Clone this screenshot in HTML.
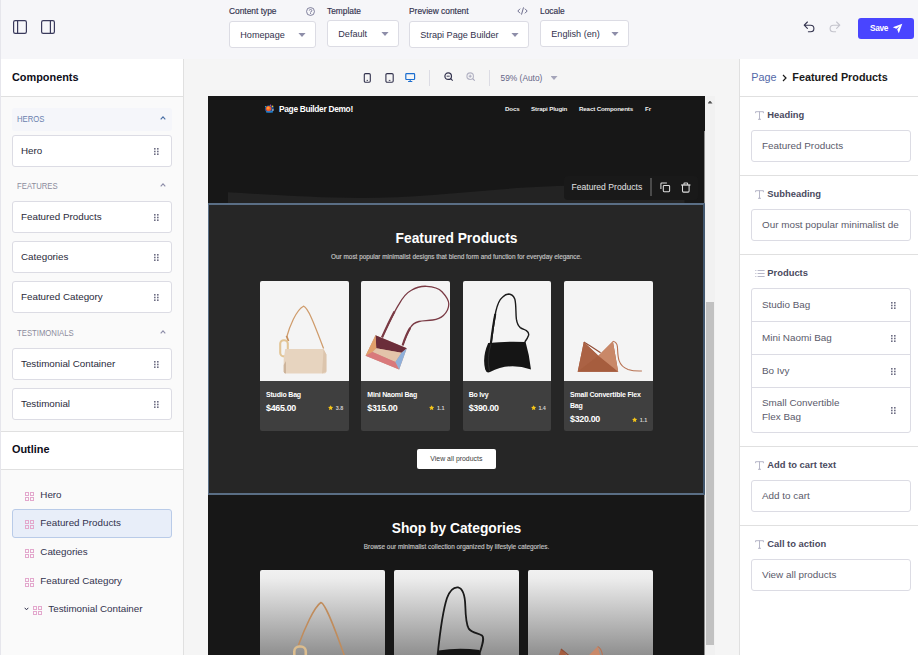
<!DOCTYPE html>
<html lang="en">
<head>
<meta charset="utf-8">
<title>Page Builder</title>
<style>
*{box-sizing:border-box;margin:0;padding:0}
html,body{width:918px;height:655px;overflow:hidden;background:#f6f6f9;font-family:"Liberation Sans",sans-serif;color:#32324d}
.abs{position:absolute}
#topbar{position:absolute;left:0;top:0;width:918px;height:59px;background:#f6f6f9}
.lbl{position:absolute;font-size:8.4px;-webkit-text-stroke:0.15px #32324d;color:#32324d;top:6px;line-height:11px;white-space:nowrap}
.sel{position:absolute;background:#fff;border:1px solid #dcdce4;border-radius:3px;font-size:9.1px;color:#32324d;line-height:26px;padding-left:10.3px;white-space:nowrap}
.sel .car{position:absolute;right:9px;top:10.5px;width:8px;height:4.6px;background:#8e8ea9;clip-path:polygon(0 0,100% 0,50% 100%)}
#left{position:absolute;left:0;top:59px;width:184px;height:596px;background:#fafafa;border-right:1px solid #e0e0e0}
#center{position:absolute;left:184px;top:59px;width:555px;height:596px;background:#f5f5f5}
#right{position:absolute;left:739px;top:59px;width:179px;height:596px;background:#fff;border-left:1px solid #e0e0e0}
.phead{position:absolute;left:0;width:100%;background:#fff;border-bottom:1px solid #e0e0e0;font-weight:bold;font-size:10.9px;color:#0d0d18;padding-left:12px}
.grp{position:absolute;left:12px;width:160px;height:23px;font-size:8.6px;color:#8c8c9c;line-height:23px;padding-left:5px;border-radius:3px;letter-spacing:0}
.item{position:absolute;left:12px;width:160px;height:32px;background:#fff;border:1px solid #dcdce4;border-radius:3px;font-size:9.8px;color:#2a2a3a;line-height:30px;padding-left:8px;white-space:nowrap}

.drag{position:absolute;left:141px;top:12px}
.chev{position:absolute;left:148.3px;top:7.6px}
.ol{position:absolute;left:12px;width:160px;height:29px;font-size:9.8px;color:#32324d;line-height:27px;border:1px solid transparent;border-radius:3px;white-space:nowrap}
.ol.sel2{background:#e8eef9;border-color:#b9cbe8}
.ol .gw{position:absolute;top:0;height:27px}
.ol .gi{position:absolute;top:10px;left:0}
.ol .ot{position:absolute;top:-1px;margin-left:-0.7px}
.ol .oc{position:absolute;left:11px;top:11px}

.pvt{white-space:nowrap}
.card{position:absolute;width:88.7px;height:150px;background:#3f3f3f;border-radius:2px;overflow:hidden}
.cimg{position:absolute;left:0;top:0;width:100%;height:100px;background:#f4f4f4}
.ct{position:absolute;left:6px;top:108px;font-size:7px;font-weight:bold;color:#fff;line-height:11px;white-space:nowrap;letter-spacing:-0.2px}
.cp{position:absolute;left:6px;margin-top:0.7px;font-size:8.9px;font-weight:bold;color:#fff;line-height:11px;letter-spacing:-0.3px}
.cr{position:absolute;right:5.5px;height:10px;line-height:10px;font-size:5.4px;color:#d0d0d0;font-weight:bold;white-space:nowrap}
.cr svg{vertical-align:-0.3px;margin-right:2.3px}
.cat{width:124.5px;height:90px;border-radius:2px 2px 0 0;overflow:hidden;background:linear-gradient(#f1f1f1 0,#ededed 8px,#8e8e8e 86px)}

.rl{font-size:9.4px;font-weight:bold;color:#4a4a5e;line-height:14px;white-space:nowrap}
.rin{width:160px;height:32px;margin-top:-0.5px;border:1px solid #dcdce4;border-radius:3px;background:#fff;font-size:9.9px;color:#5a5a6a;line-height:30px;padding-left:10px;white-space:nowrap;overflow:hidden}
.rrow{width:158px;font-size:9.9px;color:#5a5a6a;padding-left:10px;white-space:nowrap}
.gt{display:inline-block;transform:scaleX(0.9);transform-origin:0 50%}
</style>
</head>
<body>
<div class="abs" style="left:0;top:0;width:1px;height:655px;background:#e6e6ec;z-index:9"></div>
<div id="topbar">
<svg class="abs" style="left:13px;top:20px" width="14" height="14" viewBox="0 0 14 14"><rect x="0.6" y="0.6" width="12.8" height="12.8" rx="1.6" fill="none" stroke="#3a3a5c" stroke-width="1.2"/><line x1="4.6" y1="0.6" x2="4.6" y2="13.4" stroke="#3a3a5c" stroke-width="1.2"/></svg>
<svg class="abs" style="left:41px;top:20px" width="14" height="14" viewBox="0 0 14 14"><rect x="0.6" y="0.6" width="12.8" height="12.8" rx="1.6" fill="none" stroke="#3a3a5c" stroke-width="1.2"/><line x1="9.4" y1="0.6" x2="9.4" y2="13.4" stroke="#3a3a5c" stroke-width="1.2"/></svg>
<div class="lbl" style="left:229px">Content type</div>
<svg class="abs" style="left:305.8px;top:6.8px" width="9" height="9" viewBox="0 0 9 9"><circle cx="4.5" cy="4.5" r="3.95" fill="none" stroke="#6c6c8c" stroke-width="0.85"/><path d="M3.3 3.6 A1.25 1.25 0 1 1 4.5 4.9 V5.5" fill="none" stroke="#6c6c8c" stroke-width="0.8"/><circle cx="4.5" cy="6.6" r="0.5" fill="#6c6c8c"/></svg>
<div class="sel" style="left:229px;top:21px;width:87px;height:27px">Homepage<span class="car"></span></div>
<div class="lbl" style="left:327px">Template</div>
<div class="sel" style="left:327px;top:20px;width:72px;height:27px">Default<span class="car"></span></div>
<div class="lbl" style="left:409px">Preview content</div>
<svg class="abs" style="left:516.7px;top:7px" width="11" height="8" viewBox="0 0 11 8"><path d="M3.1 1.7 L0.8 4 L3.1 6.3 M7.9 1.7 L10.2 4 L7.9 6.3 M6.5 0.4 L4.5 7.6" fill="none" stroke="#666687" stroke-width="0.95"/></svg>
<div class="sel" style="left:409px;top:21px;width:120px;height:27px">Strapi Page Builder<span class="car"></span></div>
<div class="lbl" style="left:540px">Locale</div>
<div class="sel" style="left:540px;top:20px;width:89px;height:27px">English (en)<span class="car"></span></div>
<svg class="abs" style="left:803px;top:21px" width="12" height="12" viewBox="0 0 12 12"><path d="M4.4 1 L1.2 4.2 L4.4 7.4 M1.4 4.2 H7.6 A3.3 3.3 0 0 1 7.6 10.8 H5.4" fill="none" stroke="#32324d" stroke-width="1.1" stroke-linecap="round" stroke-linejoin="round"/></svg>
<svg class="abs" style="left:829px;top:21px" width="12" height="12" viewBox="0 0 12 12"><path d="M7.6 1 L10.8 4.2 L7.6 7.4 M10.6 4.2 H4.4 A3.3 3.3 0 0 0 4.4 10.8 H6.6" fill="none" stroke="#c3c3cc" stroke-width="1.1" stroke-linecap="round" stroke-linejoin="round"/></svg>
<div class="abs" style="left:858px;top:18px;width:56px;height:21px;background:#4945ff;border-radius:3px;color:#fff;font-weight:bold;font-size:8.3px;letter-spacing:-0.35px;line-height:21px;padding-left:12px">Save
<svg class="abs" style="left:34px;top:5px" width="11" height="11" viewBox="0 0 11 11"><path d="M10.3 0.7 L0.8 4.2 L4.3 5.8 L7.6 3.3 L5.2 6.6 L6.8 10.2 Z" fill="#fff"/></svg></div>
</div>
<div id="left">
<div class="phead" style="top:0;height:38px;line-height:37px">Components</div>
<div class="grp" style="top:49px;background:#f5f6fa;color:#6a7fae;"><span class="gt">HEROS</span><svg class="chev" width="6" height="4" viewBox="0 0 6 4"><path d="M0.7 3.3 L3 0.9 L5.3 3.3" fill="none" stroke="#4a6fa5" stroke-width="1.15"/></svg></div>
<div class="item" style="top:76px">Hero<svg class="drag" width="5" height="7" viewBox="0 0 5 7"><g fill="#6e6e84"><rect x="0" y="0" width="1.6" height="1.6"/><rect x="3" y="0" width="1.6" height="1.6"/><rect x="0" y="2.7" width="1.6" height="1.6"/><rect x="3" y="2.7" width="1.6" height="1.6"/><rect x="0" y="5.4" width="1.6" height="1.6"/><rect x="3" y="5.4" width="1.6" height="1.6"/></g></svg></div>
<div class="grp" style="top:116px;"><span class="gt">FEATURES</span><svg class="chev" width="6" height="4" viewBox="0 0 6 4"><path d="M0.7 3.3 L3 0.9 L5.3 3.3" fill="none" stroke="#8e8ea9" stroke-width="1.15"/></svg></div>
<div class="item" style="top:142px">Featured Products<svg class="drag" width="5" height="7" viewBox="0 0 5 7"><g fill="#6e6e84"><rect x="0" y="0" width="1.6" height="1.6"/><rect x="3" y="0" width="1.6" height="1.6"/><rect x="0" y="2.7" width="1.6" height="1.6"/><rect x="3" y="2.7" width="1.6" height="1.6"/><rect x="0" y="5.4" width="1.6" height="1.6"/><rect x="3" y="5.4" width="1.6" height="1.6"/></g></svg></div>
<div class="item" style="top:182px">Categories<svg class="drag" width="5" height="7" viewBox="0 0 5 7"><g fill="#6e6e84"><rect x="0" y="0" width="1.6" height="1.6"/><rect x="3" y="0" width="1.6" height="1.6"/><rect x="0" y="2.7" width="1.6" height="1.6"/><rect x="3" y="2.7" width="1.6" height="1.6"/><rect x="0" y="5.4" width="1.6" height="1.6"/><rect x="3" y="5.4" width="1.6" height="1.6"/></g></svg></div>
<div class="item" style="top:222px">Featured Category<svg class="drag" width="5" height="7" viewBox="0 0 5 7"><g fill="#6e6e84"><rect x="0" y="0" width="1.6" height="1.6"/><rect x="3" y="0" width="1.6" height="1.6"/><rect x="0" y="2.7" width="1.6" height="1.6"/><rect x="3" y="2.7" width="1.6" height="1.6"/><rect x="0" y="5.4" width="1.6" height="1.6"/><rect x="3" y="5.4" width="1.6" height="1.6"/></g></svg></div>
<div class="grp" style="top:263px;"><span class="gt">TESTIMONIALS</span><svg class="chev" width="6" height="4" viewBox="0 0 6 4"><path d="M0.7 3.3 L3 0.9 L5.3 3.3" fill="none" stroke="#8e8ea9" stroke-width="1.15"/></svg></div>
<div class="item" style="top:289px">Testimonial Container<svg class="drag" width="5" height="7" viewBox="0 0 5 7"><g fill="#6e6e84"><rect x="0" y="0" width="1.6" height="1.6"/><rect x="3" y="0" width="1.6" height="1.6"/><rect x="0" y="2.7" width="1.6" height="1.6"/><rect x="3" y="2.7" width="1.6" height="1.6"/><rect x="0" y="5.4" width="1.6" height="1.6"/><rect x="3" y="5.4" width="1.6" height="1.6"/></g></svg></div>
<div class="item" style="top:329px">Testimonial<svg class="drag" width="5" height="7" viewBox="0 0 5 7"><g fill="#6e6e84"><rect x="0" y="0" width="1.6" height="1.6"/><rect x="3" y="0" width="1.6" height="1.6"/><rect x="0" y="2.7" width="1.6" height="1.6"/><rect x="3" y="2.7" width="1.6" height="1.6"/><rect x="0" y="5.4" width="1.6" height="1.6"/><rect x="3" y="5.4" width="1.6" height="1.6"/></g></svg></div>
<div class="phead" style="top:372px;height:39px;line-height:35px;border-top:1px solid #e0e0e0">Outline</div>
<div class="ol" style="top:422px"><span class="gw" style="left:12px"><svg class="gi" width="9" height="9" viewBox="0 0 9 9"><g fill="none" stroke="#e3a8cd" stroke-width="1"><rect x="0.5" y="0.5" width="3" height="3"/><rect x="5.5" y="0.5" width="3" height="3"/><rect x="0.5" y="5.5" width="3" height="3"/><rect x="5.5" y="5.5" width="3" height="3"/></g></svg></span><span class="ot" style="left:28px">Hero</span></div>
<div class="ol sel2" style="top:450px"><span class="gw" style="left:12px"><svg class="gi" width="9" height="9" viewBox="0 0 9 9"><g fill="none" stroke="#e3a8cd" stroke-width="1"><rect x="0.5" y="0.5" width="3" height="3"/><rect x="5.5" y="0.5" width="3" height="3"/><rect x="0.5" y="5.5" width="3" height="3"/><rect x="5.5" y="5.5" width="3" height="3"/></g></svg></span><span class="ot" style="left:28px">Featured Products</span></div>
<div class="ol" style="top:479px"><span class="gw" style="left:12px"><svg class="gi" width="9" height="9" viewBox="0 0 9 9"><g fill="none" stroke="#e3a8cd" stroke-width="1"><rect x="0.5" y="0.5" width="3" height="3"/><rect x="5.5" y="0.5" width="3" height="3"/><rect x="0.5" y="5.5" width="3" height="3"/><rect x="5.5" y="5.5" width="3" height="3"/></g></svg></span><span class="ot" style="left:28px">Categories</span></div>
<div class="ol" style="top:508px"><span class="gw" style="left:12px"><svg class="gi" width="9" height="9" viewBox="0 0 9 9"><g fill="none" stroke="#e3a8cd" stroke-width="1"><rect x="0.5" y="0.5" width="3" height="3"/><rect x="5.5" y="0.5" width="3" height="3"/><rect x="0.5" y="5.5" width="3" height="3"/><rect x="5.5" y="5.5" width="3" height="3"/></g></svg></span><span class="ot" style="left:28px">Featured Category</span></div>
<div class="ol" style="top:536px"><svg class="oc" width="5" height="4" viewBox="0 0 5 4"><path d="M0.7 0.8 L2.5 2.8 L4.3 0.8" fill="none" stroke="#32324d" stroke-width="1"/></svg><span class="gw" style="left:20px"><svg class="gi" width="9" height="9" viewBox="0 0 9 9"><g fill="none" stroke="#e3a8cd" stroke-width="1"><rect x="0.5" y="0.5" width="3" height="3"/><rect x="5.5" y="0.5" width="3" height="3"/><rect x="0.5" y="5.5" width="3" height="3"/><rect x="5.5" y="5.5" width="3" height="3"/></g></svg></span><span class="ot" style="left:36px">Testimonial Container</span></div>
</div>
<div id="center">
<svg class="abs" style="left:179px;top:13.6px" width="9" height="10" viewBox="0 0 9 10"><rect x="1.3" y="0.6" width="6" height="8.6" rx="1.2" fill="none" stroke="#32324d" stroke-width="1.1"/><line x1="3.6" y1="7.4" x2="5" y2="7.4" stroke="#32324d" stroke-width="0.9"/></svg>
<svg class="abs" style="left:201px;top:13.6px" width="10" height="10" viewBox="0 0 10 10"><rect x="0.9" y="0.6" width="7.3" height="8.6" rx="1.2" fill="none" stroke="#32324d" stroke-width="1.1"/><line x1="3.8" y1="7.4" x2="5.4" y2="7.4" stroke="#32324d" stroke-width="0.9"/></svg>
<svg class="abs" style="left:220.8px;top:14px" width="11" height="10" viewBox="0 0 11 10"><rect x="0.8" y="0.7" width="8.8" height="5.8" rx="0.8" fill="none" stroke="#1b6ed0" stroke-width="1.2"/><line x1="5.2" y1="6.5" x2="5.2" y2="8.4" stroke="#1b6ed0" stroke-width="1.1"/><line x1="3.1" y1="8.5" x2="7.3" y2="8.5" stroke="#1b6ed0" stroke-width="1"/></svg>
<div class="abs" style="left:245.3px;top:11px;width:1px;height:16px;background:#dcdce4"></div>
<svg class="abs" style="left:259.5px;top:13px" width="10" height="10" viewBox="0 0 11 11"><circle cx="4.6" cy="4.6" r="3.6" fill="none" stroke="#32324d" stroke-width="1.35"/><line x1="2.9" y1="4.6" x2="6.3" y2="4.6" stroke="#32324d" stroke-width="1"/><line x1="7.3" y1="7.3" x2="9.6" y2="9.6" stroke="#32324d" stroke-width="1.2"/></svg>
<svg class="abs" style="left:281.6px;top:13px" width="10" height="10" viewBox="0 0 11 11"><circle cx="4.6" cy="4.6" r="3.6" fill="none" stroke="#b4b4c4" stroke-width="1.2"/><line x1="2.9" y1="4.6" x2="6.3" y2="4.6" stroke="#a5a5ba" stroke-width="1"/><line x1="4.6" y1="2.9" x2="4.6" y2="6.3" stroke="#a5a5ba" stroke-width="1"/><line x1="7.3" y1="7.3" x2="9.6" y2="9.6" stroke="#a5a5ba" stroke-width="1.2"/></svg>
<div class="abs" style="left:305.3px;top:11px;width:1px;height:16px;background:#dcdce4"></div>
<div class="abs" style="left:316.5px;top:12px;font-size:8.4px;line-height:14px;color:#666687;white-space:nowrap">59% (Auto)</div>
<div class="abs" style="left:366.5px;top:17px;width:7px;height:4px;background:#a5a5ba;clip-path:polygon(0 0,100% 0,50% 100%)"></div>
<div class="abs" style="left:521px;top:37px;width:10px;height:559px;background:#f1f1f1"></div>
<div class="abs" style="left:523.5px;top:41.5px;width:5px;height:3px;background:#505050;clip-path:polygon(50% 0,100% 100%,0 100%)"></div>
<div class="abs" style="left:522px;top:243px;width:8px;height:343px;background:#c1c1c1"></div>
<div class="abs" style="left:520px;top:72px;width:1px;height:72px;background:#8c8c8c;z-index:3"></div>
<div class="abs" style="left:520px;top:436px;width:1px;height:160px;background:#8c8c8c;z-index:3"></div>
<div id="pv" class="abs" style="left:24px;top:37px;width:497px;height:559px;background:#171717;overflow:hidden">
<svg class="abs" style="left:56px;top:7.5px" width="11" height="10" viewBox="0 0 11 10"><ellipse cx="5.4" cy="5" rx="4.6" ry="3.8" fill="#24508f"/><rect x="2" y="7.3" width="7" height="1.3" rx="0.6" fill="#1f8fe0"/><circle cx="4.6" cy="4.6" r="2.7" fill="#f2552c"/><circle cx="4.2" cy="4" r="1.5" fill="#ff9a2e"/><circle cx="8.6" cy="2.4" r="0.8" fill="#f6c630"/><circle cx="8.9" cy="6" r="0.8" fill="#e8e2d0"/><circle cx="1.6" cy="2.6" r="0.7" fill="#2fb7c9"/><circle cx="6.6" cy="1.2" r="0.6" fill="#d94fb5"/></svg>
<div class="abs pvt" style="left:71px;top:7px;font-size:8.35px;font-weight:bold;color:#fff;line-height:12px;letter-spacing:-0.3px">Page Builder Demo!</div>
<div class="abs pvt" style="left:297px;top:8px;font-size:6.2px;font-weight:bold;color:#f0f0f0;line-height:10px;letter-spacing:-0.15px">Docs</div>
<div class="abs pvt" style="left:323px;top:8px;font-size:6.2px;font-weight:bold;color:#f0f0f0;line-height:10px;letter-spacing:-0.15px">Strapi Plugin</div>
<div class="abs pvt" style="left:371px;top:8px;font-size:6.2px;font-weight:bold;color:#f0f0f0;line-height:10px;letter-spacing:-0.15px">React Components</div>
<div class="abs pvt" style="left:437px;top:8px;font-size:6.2px;font-weight:bold;color:#f0f0f0;line-height:10px;letter-spacing:-0.15px">Fr</div>
<svg class="abs" style="left:0;top:84px" width="497" height="24" viewBox="0 0 497 24"><path d="M20 24 V12.3 C 60 14.5, 110 18, 153.6 18 C 200 18, 250 13, 298 9 C 340 5.5, 400 3.5, 476.5 9 V24 Z" fill="#232323"/></svg>
<div class="abs" style="left:0;top:107px;width:497px;height:292px;background:#262626;border:2px solid #5a6e85;border-left-width:1px;border-right-color:#43586f"></div>
<div class="abs" style="left:356px;top:79.5px;width:134px;height:24px;background:#191919;border-radius:4px"></div>
<div class="abs pvt" style="left:363.5px;top:85px;font-size:8.6px;color:#e4e4e4;line-height:12px">Featured Products</div>
<div class="abs" style="left:442.3px;top:81.5px;width:1.4px;height:18px;background:#4a4a4a"></div>
<svg class="abs" style="left:451.6px;top:85.7px" width="11" height="11" viewBox="0 0 11 11"><rect x="3.3" y="3.4" width="6.3" height="6.3" rx="0.9" fill="none" stroke="#dedede" stroke-width="1.05"/><path d="M0.9 6.9 V1.8 A0.9 0.9 0 0 1 1.8 0.9 H6.9" fill="none" stroke="#dedede" stroke-width="1.05"/></svg>
<svg class="abs" style="left:473px;top:85.5px" width="10" height="11" viewBox="0 0 10 11"><path d="M0.2 3 H9.4" stroke="#dedede" stroke-width="1.3"/><path d="M3 2.7 V1.5 Q3 0.9 3.6 0.9 H6 Q6.6 0.9 6.6 1.5 V2.7 M1.5 3.1 V9.1 Q1.5 10.1 2.5 10.1 H7.1 Q8.1 10.1 8.1 9.1 V3.1" fill="none" stroke="#dedede" stroke-width="1.05"/></svg>
<div class="abs pvt" style="left:0;width:497px;text-align:center;top:134px;font-size:13.8px;font-weight:bold;color:#fff;line-height:18px">Featured Products</div>
<div class="abs pvt" style="left:0;width:497px;text-align:center;top:156px;font-size:6.4px;color:#c4c4c4;line-height:10px;-webkit-text-stroke:0.15px #c4c4c4">Our most popular minimalist designs that blend form and function for everyday elegance.</div>
<div class="card" style="left:52px;top:185px"><div class="cimg" id="bag1"><svg width="88.7" height="100" viewBox="0 0 88.7 100"><path d="M26.7 56 C29.5 46, 36 29, 43.5 25.2 C48.5 27, 55 45, 63.6 67.5" stroke="#cf9c6c" stroke-width="1.25" fill="none"/><path d="M26.5 55 L28.5 60" stroke="#c58d5a" stroke-width="1.8" fill="none"/><rect x="20.2" y="59.2" width="7.6" height="16.2" rx="3.6" stroke="#e2c596" stroke-width="2.1" fill="none"/><path d="M25.2 68 H63.5 L66.4 73.5 V90.4 Q66.4 92.4 64.4 92.4 H25.7 Q23.7 92.4 23.7 90.4 V78 Z" fill="#e7d4bf"/><path d="M23.7 84 L26 80 V92.4 H25.7 Q23.7 92.4 23.7 90.4 Z" fill="#cdb49b"/><path d="M63.5 68 L66.4 73.5 V90.4 L62 92.4 L63 78 Z" fill="#dcc5ad"/></svg></div><div class="ct">Studio Bag</div><div class="cp" style="top:121px">$465.00</div><div class="cr" style="top:122px"><svg width="5.3" height="5.3" viewBox="0 0 10 10"><path d="M5 0.3 L6.5 3.5 L9.9 3.9 L7.4 6.2 L8.1 9.7 L5 8 L1.9 9.7 L2.6 6.2 L0.1 3.9 L3.5 3.5 Z" fill="#f5c518"/></svg><span>3.8</span></div></div>
<div class="card" style="left:153.3px;top:185px"><div class="cimg" id="bag2"><svg width="88.7" height="100" viewBox="0 0 88.7 100"><path d="M21.4 55.7 C27 44, 33 31, 38.2 22.9 C42 16, 46 11.5, 50.4 9.2 C55 6.5, 60 5, 65.6 5.3 C72 5.6, 78 7.5, 81 10.7 C85 15, 87.8 19, 87.8 22.9 C87.8 28, 85.5 31.5, 82.4 34.4 C79.5 37, 76 38.3, 71.8 39 C67 39.8, 62 39.6, 58 40.5 C54 41.5, 51 43.5, 48.9 47.3 C46.5 52, 44 58, 42 63.4" stroke="#7a3a44" stroke-width="1.3" fill="none"/><path d="M21 56.5 C25 47.5, 29 39, 33.5 30.5" stroke="#7a3a44" stroke-width="2.2" fill="none"/><path d="M41.6 64.5 C43.5 58.5, 46 52, 49.2 46.8" stroke="#7a3a44" stroke-width="2.2" fill="none"/><polygon points="14.5,54.2 45.8,67.2 38.2,88.5 4.6,74.8" fill="#c99a86"/><polygon points="14.5,54.2 45.8,67.2 40.5,71.8 15.3,67.2" fill="#6b2d3a"/><polygon points="14.5,54.2 15.3,67.2 11.5,71 4.6,74.8" fill="#e2a06a"/><polygon points="15.3,67.2 40.5,71.8 34.4,81 11.5,71" fill="#e3c4aa"/><polygon points="11.5,71 34.4,81 38.2,88.5 4.6,74.8" fill="#d9797b"/><polygon points="45.8,67.2 38.2,88.5 34.4,81 40.5,71.8" fill="#8fb0da"/></svg></div><div class="ct">Mini Naomi Bag</div><div class="cp" style="top:121px">$315.00</div><div class="cr" style="top:122px"><svg width="5.3" height="5.3" viewBox="0 0 10 10"><path d="M5 0.3 L6.5 3.5 L9.9 3.9 L7.4 6.2 L8.1 9.7 L5 8 L1.9 9.7 L2.6 6.2 L0.1 3.9 L3.5 3.5 Z" fill="#f5c518"/></svg><span>1.1</span></div></div>
<div class="card" style="left:254.7px;top:185px"><div class="cimg" id="bag3"><svg width="88.7" height="100" viewBox="0 0 88.7 100"><path d="M28.2 62 C29.5 52, 31 40, 32.8 30.5 C34.5 23, 36.5 18.5, 39.7 16 C41.8 13.8, 43.8 13, 45.8 13 C48.5 13.2, 50.6 15, 51.9 18.3 C53.3 24, 52.6 32, 53.4 38.2 C54 42, 55 44.8, 57.3 46.6 C59.5 48.2, 61.6 48.4, 63.4 49.6 C65.2 50.8, 66 52.4, 65.6 54.2 C64.8 56.8, 63.4 58.8, 61.8 61" stroke="#1a1a1a" stroke-width="1.4" fill="none"/><path d="M27.8 63 C29 53, 30.5 42, 32.3 33" stroke="#1a1a1a" stroke-width="2.1" fill="none"/><path d="M25.2 62 Q44 60 62.6 61 Q66.4 74 68 88.5 Q46 81 27 91 Q23.5 92.5 22.2 88.5 Q19 76 25.2 62 Z" fill="#151515"/><path d="M28 63 Q23.5 77 26.5 90" stroke="#3a3a3a" stroke-width="0.6" fill="none"/></svg></div><div class="ct">Bo Ivy</div><div class="cp" style="top:121px">$390.00</div><div class="cr" style="top:122px"><svg width="5.3" height="5.3" viewBox="0 0 10 10"><path d="M5 0.3 L6.5 3.5 L9.9 3.9 L7.4 6.2 L8.1 9.7 L5 8 L1.9 9.7 L2.6 6.2 L0.1 3.9 L3.5 3.5 Z" fill="#f5c518"/></svg><span>1.4</span></div></div>
<div class="card" style="left:356px;top:185px"><div class="cimg" id="bag4"><svg width="88.7" height="100" viewBox="0 0 88.7 100"><path d="M48.9 60.3 C52 61, 53.2 63, 53.4 65.6 C53.8 70, 53.6 75, 55 79.4 C56.5 84, 60 87, 64.1 88.5 C68.5 90, 73 90.2, 77.9 90" stroke="#b87252" stroke-width="1.1" fill="none"/><path d="M19.8 61 C25 64, 31 68, 36.6 71.8" stroke="#8f4a32" stroke-width="1.2" fill="none"/><polygon points="19.8,61 34.4,74.8 48.9,60.3 54.2,90.8 13.7,90.8" fill="#a96043"/><polygon points="19.8,61 34.4,74.8 13.7,90.8" fill="#ab6244"/><polygon points="13.7,90.8 34.4,74.8 54.2,90.8" fill="#a65d3e"/><polygon points="48.9,60.3 54.2,90.8 34.4,74.8" fill="#c98868"/></svg></div><div class="ct">Small Convertible Flex<br>Bag</div><div class="cp" style="top:132.5px">$320.00</div><div class="cr" style="top:133.5px"><svg width="5.3" height="5.3" viewBox="0 0 10 10"><path d="M5 0.3 L6.5 3.5 L9.9 3.9 L7.4 6.2 L8.1 9.7 L5 8 L1.9 9.7 L2.6 6.2 L0.1 3.9 L3.5 3.5 Z" fill="#f5c518"/></svg><span>1.1</span></div></div>
<div class="abs pvt" style="left:209px;top:353px;width:78.7px;height:20px;background:#fff;border-radius:2px;font-size:6.9px;color:#3a3a3a;text-align:center;line-height:20px">View all products</div>
<div class="abs pvt" style="left:0;width:497px;text-align:center;top:424px;font-size:13.8px;font-weight:bold;color:#fff;line-height:18px">Shop by Categories</div>
<div class="abs pvt" style="left:0;width:497px;text-align:center;top:446px;font-size:6.4px;color:#c4c4c4;line-height:10px;-webkit-text-stroke:0.15px #c4c4c4">Browse our minimalist collection organized by lifestyle categories.</div>
<div class="abs cat" id="cat1" style="left:52px;top:474px"><svg width="124" height="90" viewBox="0 0 124 90"><path d="M38.5 75 C44 60, 54 37, 60.9 32.5 C66 34, 76 62, 84.5 86" stroke="#c08c5c" stroke-width="1.5" fill="none"/><rect x="34.3" y="76.5" width="11.5" height="22" rx="5" stroke="#dcbd8e" stroke-width="2.6" fill="none"/></svg></div>
<div class="abs cat" id="cat2" style="left:186px;top:474px"><svg width="124" height="90" viewBox="0 0 124 90"><path d="M43.6 85 C46 62, 49 40, 53 28 C56 20, 60 17, 64 17.4 C69 18.5, 71 26, 71.3 36 C71.6 46, 72 54, 74.7 58.6 C78 63, 84 63, 88 65.5 C91 68, 88 76, 85 85" stroke="#1a1a1a" stroke-width="1.8" fill="none"/><path d="M42 90 L44.5 80.5 Q64 77.5 85.5 80 L88 90 Z" fill="#151515"/></svg></div>
<div class="abs cat" id="cat3" style="left:320px;top:474px"><svg width="124" height="90" viewBox="0 0 124 90"><polygon points="33,79 43,90 29,90" fill="#a65d3e"/><polygon points="69.7,76.6 73.5,90 56,90" fill="#c98868"/><path d="M33 79 L45 89" stroke="#8f4a32" stroke-width="1.2"/><path d="M69.7 76.6 C73 78, 74.5 82, 75 90" stroke="#b87252" stroke-width="1.1" fill="none"/></svg></div>
</div>
</div>
<div id="right">
<div class="abs" style="left:0;top:0;width:178px;height:38px;border-bottom:1px solid #e0e0e0"></div>
<div class="abs" style="left:11.3px;top:10px;font-size:10.8px;line-height:16px;color:#5468a8;white-space:nowrap">Page</div>
<svg class="abs" style="left:42px;top:14.5px" width="5" height="8" viewBox="0 0 5 8"><path d="M1 1 L4 4 L1 7" fill="none" stroke="#1a1a1a" stroke-width="1.2"/></svg>
<div class="abs" style="left:52.3px;top:10px;font-size:10.8px;line-height:16px;font-weight:bold;color:#1a1a1a;white-space:nowrap">Featured Products</div>
<svg class="abs" style="left:15px;top:52.0px" width="9" height="9" viewBox="0 0 9 9"><path d="M0.6 2.2 V0.7 H8.4 V2.2 M4.5 0.7 V8.3 M3 8.3 H6" fill="none" stroke="#a5a5ba" stroke-width="0.8"/></svg>
<div class="abs rl" style="left:27.3px;top:49.0px">Heading</div>
<div class="abs rin" style="left:11px;top:71.5px">Featured Products</div>
<div class="abs" style="left:0;top:116.0px;width:178px;height:1px;background:#e0e0e0"></div>
<svg class="abs" style="left:15px;top:131.0px" width="9" height="9" viewBox="0 0 9 9"><path d="M0.6 2.2 V0.7 H8.4 V2.2 M4.5 0.7 V8.3 M3 8.3 H6" fill="none" stroke="#a5a5ba" stroke-width="0.8"/></svg>
<div class="abs rl" style="left:27.3px;top:128.0px">Subheading</div>
<div class="abs rin" style="left:11px;top:150.5px">Our most popular minimalist de</div>
<div class="abs" style="left:0;top:195.0px;width:178px;height:1px;background:#e0e0e0"></div>
<svg class="abs" style="left:14.5px;top:210.0px" width="10" height="9" viewBox="0 0 10 9"><g stroke="#a5a5ba" stroke-width="0.8"><line x1="0.3" y1="1.5" x2="1.3" y2="1.5"/><line x1="2.6" y1="1.5" x2="9.6" y2="1.5"/><line x1="0.3" y1="4.5" x2="1.3" y2="4.5"/><line x1="2.6" y1="4.5" x2="9.6" y2="4.5"/><line x1="0.3" y1="7.5" x2="1.3" y2="7.5"/><line x1="2.6" y1="7.5" x2="9.6" y2="7.5"/></g></svg>
<div class="abs rl" style="left:27.3px;top:207.0px">Products</div>
<div class="abs" style="left:11px;top:229px;width:160px;height:145px;border:1px solid #dcdce4;border-radius:3px;overflow:hidden;background:#fff"><div class="abs rrow" style="left:0;top:0px;height:32px;line-height:32px;">Studio Bag<svg class="abs" style="left:139.2px;top:12.5px" width="5" height="7" viewBox="0 0 5 7"><g fill="#6e6e84"><rect x="0" y="0" width="1.6" height="1.6"/><rect x="3" y="0" width="1.6" height="1.6"/><rect x="0" y="2.7" width="1.6" height="1.6"/><rect x="3" y="2.7" width="1.6" height="1.6"/><rect x="0" y="5.4" width="1.6" height="1.6"/><rect x="3" y="5.4" width="1.6" height="1.6"/></g></svg></div><div class="abs rrow" style="left:0;top:32px;height:33px;border-top:1px solid #dcdce4;line-height:32px;">Mini Naomi Bag<svg class="abs" style="left:139.2px;top:12.5px" width="5" height="7" viewBox="0 0 5 7"><g fill="#6e6e84"><rect x="0" y="0" width="1.6" height="1.6"/><rect x="3" y="0" width="1.6" height="1.6"/><rect x="0" y="2.7" width="1.6" height="1.6"/><rect x="3" y="2.7" width="1.6" height="1.6"/><rect x="0" y="5.4" width="1.6" height="1.6"/><rect x="3" y="5.4" width="1.6" height="1.6"/></g></svg></div><div class="abs rrow" style="left:0;top:65px;height:33px;border-top:1px solid #dcdce4;line-height:32px;">Bo Ivy<svg class="abs" style="left:139.2px;top:12.5px" width="5" height="7" viewBox="0 0 5 7"><g fill="#6e6e84"><rect x="0" y="0" width="1.6" height="1.6"/><rect x="3" y="0" width="1.6" height="1.6"/><rect x="0" y="2.7" width="1.6" height="1.6"/><rect x="3" y="2.7" width="1.6" height="1.6"/><rect x="0" y="5.4" width="1.6" height="1.6"/><rect x="3" y="5.4" width="1.6" height="1.6"/></g></svg></div><div class="abs rrow" style="left:0;top:98px;height:45px;border-top:1px solid #dcdce4;padding-top:7.7px;line-height:14px;">Small Convertible<br>Flex Bag<svg class="abs" style="left:139.2px;top:18.8px" width="5" height="7" viewBox="0 0 5 7"><g fill="#6e6e84"><rect x="0" y="0" width="1.6" height="1.6"/><rect x="3" y="0" width="1.6" height="1.6"/><rect x="0" y="2.7" width="1.6" height="1.6"/><rect x="3" y="2.7" width="1.6" height="1.6"/><rect x="0" y="5.4" width="1.6" height="1.6"/><rect x="3" y="5.4" width="1.6" height="1.6"/></g></svg></div></div>
<div class="abs" style="left:0;top:387px;width:178px;height:1px;background:#e0e0e0"></div>
<svg class="abs" style="left:15px;top:402.0px" width="9" height="9" viewBox="0 0 9 9"><path d="M0.6 2.2 V0.7 H8.4 V2.2 M4.5 0.7 V8.3 M3 8.3 H6" fill="none" stroke="#a5a5ba" stroke-width="0.8"/></svg>
<div class="abs rl" style="left:27.3px;top:399.0px">Add to cart text</div>
<div class="abs rin" style="left:11px;top:421.5px">Add to cart</div>
<div class="abs" style="left:0;top:466.0px;width:178px;height:1px;background:#e0e0e0"></div>
<svg class="abs" style="left:15px;top:481.0px" width="9" height="9" viewBox="0 0 9 9"><path d="M0.6 2.2 V0.7 H8.4 V2.2 M4.5 0.7 V8.3 M3 8.3 H6" fill="none" stroke="#a5a5ba" stroke-width="0.8"/></svg>
<div class="abs rl" style="left:27.3px;top:478.0px">Call to action</div>
<div class="abs rin" style="left:11px;top:500.5px">View all products</div>
</div>
</body>
</html>
